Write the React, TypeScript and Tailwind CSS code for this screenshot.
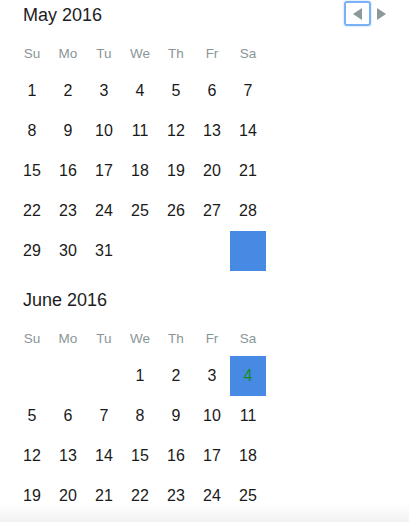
import React from 'react';

type Month = {
  title: string;
  offset: number;
  days: number;
  // rows actually shown, and which cell index is highlighted
  rows: number;
  highlight?: number;
  highlightLabel?: boolean;
};

const weekdays = ['Su', 'Mo', 'Tu', 'We', 'Th', 'Fr', 'Sa'];

const months: Month[] = [
  { title: 'May 2016', offset: 0, days: 31, rows: 5, highlight: 34 },
  { title: 'June 2016', offset: 3, days: 30, rows: 4, highlight: 6, highlightLabel: true },
];

function NavButtons() {
  return (
    <div className="flex items-center gap-[6px] pt-[1px]">
      <button className="flex h-[25px] w-[27px] items-center justify-center rounded-[3px] border-[2.5px] border-[#7ab0f6] shadow-[0_0_2px_#9cc4f8]">
        <span className="block h-0 w-0 border-y-[6px] border-r-[9px] border-y-transparent border-r-[#8b999a]" />
      </button>
      <span className="block h-0 w-0 border-y-[6px] border-l-[9px] border-y-transparent border-l-[#8b999a]" />
    </div>
  );
}

function MonthGrid({ month, first }: { month: Month; first: boolean }) {
  const cells: (number | null)[] = [];
  for (let i = 0; i < month.rows * 7; i++) {
    const day = i - month.offset + 1;
    cells.push(day >= 1 && day <= month.days ? day : null);
  }

  return (
    <div>
      <div className="flex h-[30px] items-start justify-between pr-[23px]">
        <div className="pl-[23px] text-[18px] leading-[30px] text-[#1d1d1f]">{month.title}</div>
        {first && <NavButtons />}
      </div>
      <div className="ml-[14px] mt-[8px] grid h-[33px] w-[252px] grid-cols-7 items-center text-[13.5px] text-[#8a9597]">
        {weekdays.map(d => (
          <div key={d} className="text-center">
            {d}
          </div>
        ))}
      </div>
      <div className="ml-[14px] grid w-[252px] grid-cols-7 text-[16px] text-[#1a1a1a]">
        {cells.map((day, i) => (
          <div
            key={i}
            className={
              'flex h-[40px] items-center justify-center ' +
              (i === month.highlight ? 'bg-[#468ae3]' : '')
            }
          >
            <span className={i === month.highlight && month.highlightLabel ? 'text-[#1a8a1f]' : ''}>
              {day ?? ''}
            </span>
          </div>
        ))}
      </div>
    </div>
  );
}

export default function App() {
  return (
    <div
      className="relative h-[522px] w-[409px] overflow-hidden bg-white"
      style={{ fontFamily: '"Helvetica Neue", Helvetica, "Liberation Sans", Arial, sans-serif' }}
    >
      <MonthGrid month={months[0]} first />
      <div className="mt-[14px]">
        <MonthGrid month={months[1]} first={false} />
      </div>
      <div className="pointer-events-none absolute bottom-0 left-0 h-[18px] w-full bg-gradient-to-b from-white to-[#f1f1f1]" />
    </div>
  );
}
